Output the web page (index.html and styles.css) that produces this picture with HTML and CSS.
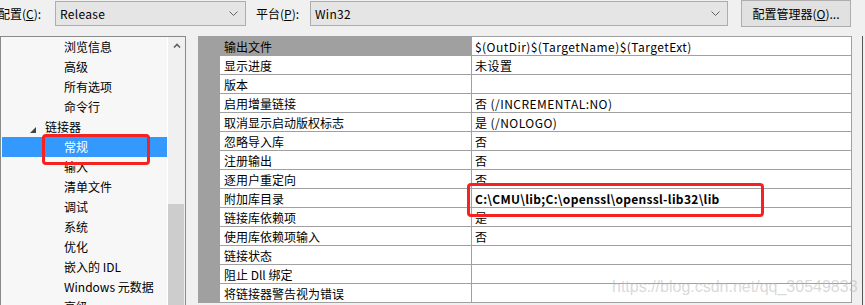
FILE: index.html
```html
<!DOCTYPE html>
<html lang="zh-CN">
<head>
  <meta charset="UTF-8" />
  <title>链接器 - 常规</title>
  <link rel="stylesheet" href="styles.css">
</head>
<body>
  <div class="page">
    <div class="toolbar">
      <span class="label label-config">配置(<u>C</u>):</span>
      <div class="combo combo-config">
        <span>Release</span>
        <svg class="chevron" width="9" height="5" viewBox="0 0 9 5"><polyline points="0.5,0.5 4.5,4.5 8.5,0.5" /></svg>
      </div>
      <span class="label label-platform">平台(<u>P</u>):</span>
      <div class="combo combo-platform">
        <span>Win32</span>
        <svg class="chevron" width="9" height="5" viewBox="0 0 9 5"><polyline points="0.5,0.5 4.5,4.5 8.5,0.5" /></svg>
      </div>
      <div class="btn">配置管理器(<u>O</u>)...</div>
    </div>

    <div class="main">
      <div class="tree">
        <ul class="tree-list">
          <li class="child">浏览信息</li>
          <li class="child">高级</li>
          <li class="child">所有选项</li>
          <li class="child">命令行</li>
          <li class="parent"><svg class="expander" width="6" height="6" viewBox="0 0 6 6"><polygon points="6,0 6,6 0,6" /></svg>链接器</li>
          <li class="child selected">常规</li>
          <li class="child">输入</li>
          <li class="child">清单文件</li>
          <li class="child">调试</li>
          <li class="child">系统</li>
          <li class="child">优化</li>
          <li class="child">嵌入的 IDL</li>
          <li class="child">Windows 元数据</li>
          <li class="child">高级</li>
        </ul>
        <div class="scrollbar">
          <div class="scroll-arrow">
            <svg width="8" height="5" viewBox="0 0 8 5"><polyline points="1,4.5 4,1.5 7,4.5" /></svg>
          </div>
          <div class="scroll-thumb"></div>
        </div>
      </div>

      <div class="grid">
        <div class="row selected"><div class="cat"></div><div class="name">输出文件</div><div class="value">$(OutDir)$(TargetName)$(TargetExt)</div></div>
        <div class="row"><div class="cat"></div><div class="name">显示进度</div><div class="value">未设置</div></div>
        <div class="row"><div class="cat"></div><div class="name">版本</div><div class="value"></div></div>
        <div class="row"><div class="cat"></div><div class="name">启用增量链接</div><div class="value">否 (/INCREMENTAL:NO)</div></div>
        <div class="row"><div class="cat"></div><div class="name">取消显示启动版权标志</div><div class="value">是 (/NOLOGO)</div></div>
        <div class="row"><div class="cat"></div><div class="name">忽略导入库</div><div class="value">否</div></div>
        <div class="row"><div class="cat"></div><div class="name">注册输出</div><div class="value">否</div></div>
        <div class="row"><div class="cat"></div><div class="name">逐用户重定向</div><div class="value">否</div></div>
        <div class="row"><div class="cat"></div><div class="name">附加库目录</div><div class="value strong">C:\CMU\lib;C:\openssl\openssl-lib32\lib</div></div>
        <div class="row"><div class="cat"></div><div class="name">链接库依赖项</div><div class="value">是</div></div>
        <div class="row"><div class="cat"></div><div class="name">使用库依赖项输入</div><div class="value">否</div></div>
        <div class="row"><div class="cat"></div><div class="name">链接状态</div><div class="value"></div></div>
        <div class="row"><div class="cat"></div><div class="name">阻止 Dll 绑定</div><div class="value"></div></div>
        <div class="row"><div class="cat"></div><div class="name">将链接器警告视为错误</div><div class="value"></div></div>
      </div>

      <div class="edge"></div>
    </div>

    <div class="mark mark-tree"></div>
    <div class="mark mark-value"></div>
    <div class="watermark">https://blog.csdn.net/qq_30549833</div>
  </div>
</body>
</html>
```

FILE: styles.css
```css
body {
  margin: 0;
  background: #f0f0f0;
  font-family: "Noto Sans CJK SC", sans-serif;
  font-size: 12px;
  color: #000;
}
.page {
  position: relative;
  width: 865px;
  height: 305px;
  overflow: hidden;
}

/* top bar */
.toolbar {
  display: flex;
  align-items: flex-start;
  height: 36px;
  padding-top: 1px;
  box-sizing: border-box;
}
.label {
  height: 25px;
  line-height: 25px;
  white-space: nowrap;
  box-sizing: border-box;
}
.label-config { width: 57px; margin-left: -2px; }
.label-platform { width: 64px; padding-left: 10px; }
.combo {
  display: flex;
  align-items: center;
  justify-content: space-between;
  height: 25px;
  box-sizing: border-box;
  border: 1px solid #adadad;
  background: #e5e5e5;
  padding: 0 7px 0 4px;
  letter-spacing: 0.3px;
}
.combo-config { width: 191px; }
.combo-platform { width: 418px; }
.chevron polyline {
  fill: none;
  stroke: #606060;
  stroke-width: 1;
}
.btn {
  width: 110px;
  height: 27px;
  margin-left: 13px;
  margin-top: -1px;
  box-sizing: border-box;
  border: 1px solid #adadad;
  background: #e1e1e1;
  text-align: center;
  line-height: 25px;
}

/* body */
.main {
  display: flex;
  height: 269px;
}

.tree {
  display: flex;
  width: 186px;
  box-sizing: border-box;
  border: 1px solid #8a8a8a;
  border-bottom: none;
  background: #f7f7f7;
}
.tree-list {
  list-style: none;
  margin: 0;
  padding: 0;
  width: 166px;
}
.tree-list li {
  height: 20px;
  line-height: 20px;
  white-space: nowrap;
}
.tree-list .child { padding-left: 63px; }
.tree-list .parent { padding-left: 29px; }
.tree-list .selected {
  margin-left: 1px;
  padding-left: 62px;
  background: #3399ff;
  color: #fff;
}
.expander {
  margin-right: 9px;
  vertical-align: -1px;
}
.expander polygon { fill: #444; }

.scrollbar {
  display: flex;
  flex-direction: column;
  width: 18px;
  box-sizing: border-box;
  border-left: 1px solid #fff;
  background: #f0f0f0;
}
.scroll-arrow {
  height: 17px;
  display: flex;
  align-items: center;
  justify-content: center;
}
.scroll-arrow polyline {
  fill: none;
  stroke: #606060;
  stroke-width: 1.6;
}
.scroll-thumb {
  flex: 1;
  margin: 150px 1px 0 0;
  background: #cdcdcd;
}

/* property grid */
.grid {
  align-self: flex-start;
  width: 654px;
  margin-left: 12px;
  box-sizing: border-box;
  border-top: 1px solid #a0a0a0;
  border-right: 1px solid #a0a0a0;
}
.row {
  display: flex;
  height: 19px;
}
.cat {
  width: 22px;
  background: #a0a0a0;
}
.name, .value {
  box-sizing: border-box;
  height: 19px;
  line-height: 19px;
  border-bottom: 1px solid #a0a0a0;
  background: #fff;
  white-space: nowrap;
  overflow: hidden;
}
.name {
  width: 251px;
  padding-left: 4px;
}
.value {
  flex: 1;
  border-left: 1px solid #a0a0a0;
  padding-left: 3px;
  letter-spacing: 0.45px;
}
.row.selected .name { background: #a0a0a0; }
.value.strong {
  font-weight: bold;
  letter-spacing: 0.3px;
}

.edge {
  width: 1px;
  margin-left: auto;
  margin-right: 2px;
  background: #555;
}

/* annotations */
.mark {
  position: absolute;
  box-sizing: border-box;
  border: 3px solid #f52222;
  border-radius: 4px;
}
.mark-tree { left: 42px; top: 134px; width: 108px; height: 31px; }
.mark-value { left: 467px; top: 183px; width: 297px; height: 34px; }

.watermark {
  position: absolute;
  left: 612px;
  top: 278px;
  font-family: "Liberation Sans", sans-serif;
  font-size: 16px;
  color: rgba(185, 185, 185, 0.55);
  white-space: nowrap;
}
```
